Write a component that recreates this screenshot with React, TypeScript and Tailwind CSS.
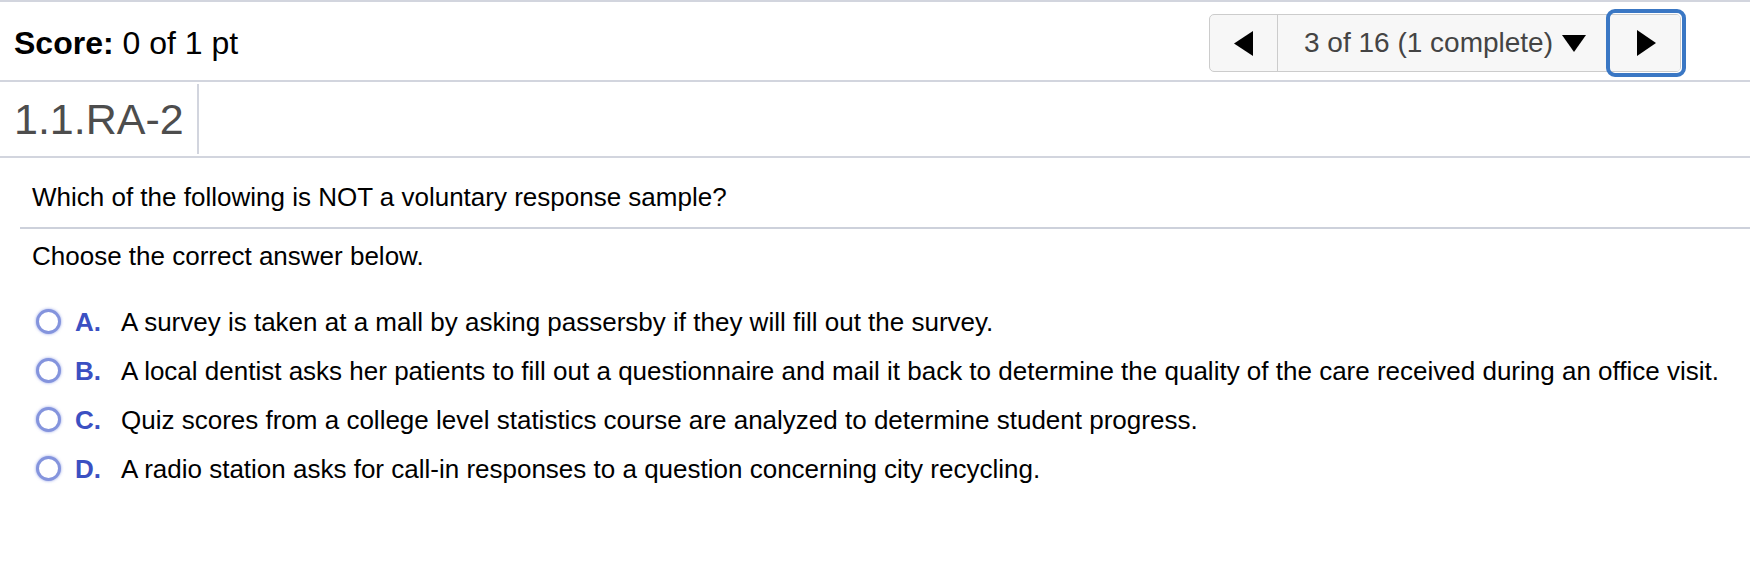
import React from "react";

const options = [
  { letter: "A.", text: "A survey is taken at a mall by asking passersby if they will fill out the survey." },
  { letter: "B.", text: "A local dentist asks her patients to fill out a questionnaire and mail it back to determine the quality of the care received during an office visit." },
  { letter: "C.", text: "Quiz scores from a college level statistics course are analyzed to determine student progress." },
  { letter: "D.", text: "A radio station asks for call-in responses to a question concerning city recycling." },
];

export default function App() {
  return (
    <div className="w-[1750px] h-[566px] bg-white font-['Liberation_Sans',Arial,Helvetica,sans-serif] text-black overflow-hidden">
      {/* Header */}
      <div className="h-[82px] border-t-2 border-b-2 border-[#d2d5de] flex items-center justify-between pl-[14px] pr-[69px] pt-[4px]">
        <div className="text-[32px] leading-none">
          <span className="font-bold">Score:</span> 0 of 1 pt
        </div>
        <div className="flex h-[58px] border-[1.5px] border-[#cccccc] rounded-[5px] bg-[#f7f7f7]">
          <button className="w-[68px] h-full flex items-center justify-center border-r-[1.5px] border-[#cccccc]">
            <svg width="19" height="25" viewBox="0 0 19 25">
              <polygon points="19,0 19,25 0,12.5" fill="#000" />
            </svg>
          </button>
          <button className="w-[334px] h-full flex items-center justify-center gap-[9px] text-[28px] text-[#444444]">
            <span>3 of 16 (1 complete)</span>
            <svg width="24" height="17" viewBox="0 0 24 17">
              <polygon points="0,0 24,0 12,17" fill="#000" />
            </svg>
          </button>
          <button className="w-[68px] h-full flex items-center justify-center rounded-[3px] outline-4 outline-solid outline-[#3a77c4] outline-offset-2 bg-[#f7f7f7]">
            <svg width="19" height="26" viewBox="0 0 19 26">
              <polygon points="0,0 0,26 19,13" fill="#000" />
            </svg>
          </button>
        </div>
      </div>

      {/* Question id row */}
      <div className="h-[76px] border-b-2 border-[#d2d5de] flex items-stretch">
        <div className="my-[2px] pl-[14px] pr-[13px] border-r-2 border-[#d2d5de] flex items-center text-[43px] leading-none text-[#4d4d4d]">
          1.1.RA-2
        </div>
      </div>

      {/* Question */}
      <div className="pl-[32px] pt-[24px] pb-[15px] text-[26px] leading-[30px]">
        Which of the following is NOT a voluntary response sample?
      </div>
      <div className="ml-[20px] h-[2px] bg-[#cdd1db]" />
      <div className="pl-[32px] pt-[12px] text-[26px] leading-[30px]">
        Choose the correct answer below.
      </div>

      <div className="mt-[26px] pl-[36px]">
        {options.map((o) => (
          <div key={o.letter} className="h-[49px] flex items-center text-[26px] leading-[30px]">
            <span className="w-[25px] h-[25px] rounded-full border-[3px] border-[#8494dd] shadow-[0_0_3px_rgba(100,120,220,0.7)] bg-white shrink-0" />
            <span className="ml-[14px] w-[46px] font-bold text-[#3b50c2]">{o.letter}</span>
            <span>{o.text}</span>
          </div>
        ))}
      </div>
    </div>
  );
}
